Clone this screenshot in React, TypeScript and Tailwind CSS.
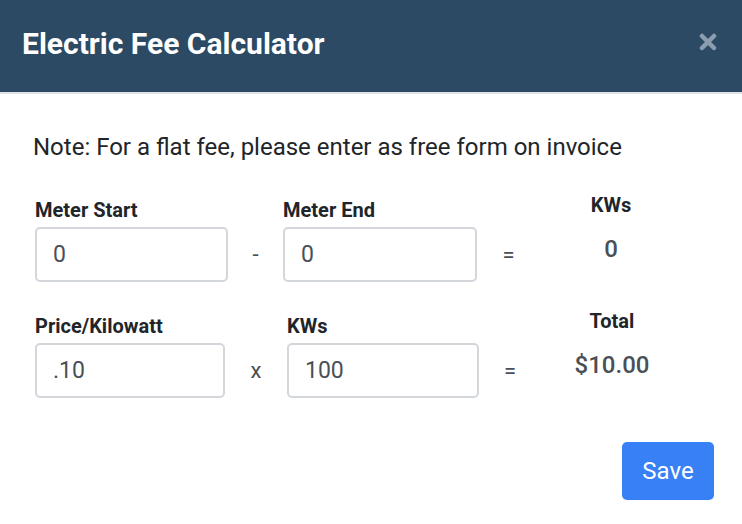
import React from "react";

const font = { fontFamily: "Roboto, 'Noto Sans', sans-serif" };

function Field({ label, value, width }: { label: string; value: string; width: string }) {
  return (
    <div className={`flex flex-col ${width}`}>
      <label className="text-[20px] font-bold leading-[24px] text-[#212529]">{label}</label>
      <input
        readOnly
        value={value}
        className="mt-[5px] h-[55px] w-full rounded-[5px] border-2 border-[#d3d7db] px-[16px] text-[23px] text-[#495057] outline-none"
      />
    </div>
  );
}

function Op({ children, width }: { children: React.ReactNode; width: string }) {
  return (
    <div className={`flex h-[55px] items-center justify-center self-end text-[22px] text-[#495057] ${width}`}>
      {children}
    </div>
  );
}

function Result({ label, value }: { label: string; value: string }) {
  return (
    <div className="-mt-[5px] flex w-[142px] flex-col items-center self-start">
      <span className="text-[20px] font-bold leading-[24px] text-[#212529]">{label}</span>
      <span className="mt-[18px] text-[24px] font-medium leading-[28px] text-[#495057]">{value}</span>
    </div>
  );
}

export default function App() {
  return (
    <div className="h-[524px] w-[742px] bg-white" style={font}>
      <div className="flex h-[94px] items-center justify-between border-b-2 border-[#dde2e7] bg-[#2c4a63] pb-[4px] pl-[22px] pr-[24px]">
        <h1 className="text-[30px] font-bold leading-[36px] text-white">Electric Fee Calculator</h1>
        <button type="button" aria-label="Close" className="mb-[4px] flex h-[20px] w-[20px] items-center justify-center">
          <svg width="18" height="18" viewBox="0 0 18 18" aria-hidden="true">
            <path d="M3 3 L15 15 M15 3 L3 15" stroke="#8d9db0" strokeWidth="4.5" strokeLinecap="round" />
          </svg>
        </button>
      </div>

      <div className="px-[33px] pt-[39px]">
        <p className="text-[24px] leading-[28px] text-[#212529]">Note: For a flat fee, please enter as free form on invoice</p>

        <div className="mt-[37px] flex pl-[2px]">
          <Field label="Meter Start" value="0" width="w-[193px]" />
          <Op width="w-[55px]">-</Op>
          <Field label="Meter End" value="0" width="w-[194px]" />
          <Op width="w-[63px]">=</Op>
          <Result label="KWs" value="0" />
        </div>

        <div className="mt-[32px] flex pl-[2px]">
          <Field label="Price/Kilowatt" value=".10" width="w-[190px]" />
          <Op width="w-[62px]">x</Op>
          <Field label="KWs" value="100" width="w-[192px]" />
          <Op width="w-[62px]">=</Op>
          <Result label="Total" value="$10.00" />
        </div>

        <div className="mt-[44px] flex justify-end">
          <button
            type="button"
            className="-mr-[5px] h-[58px] w-[92px] rounded-[5px] bg-[#3880f5] text-[24px] text-white"
          >
            Save
          </button>
        </div>
      </div>
    </div>
  );
}
